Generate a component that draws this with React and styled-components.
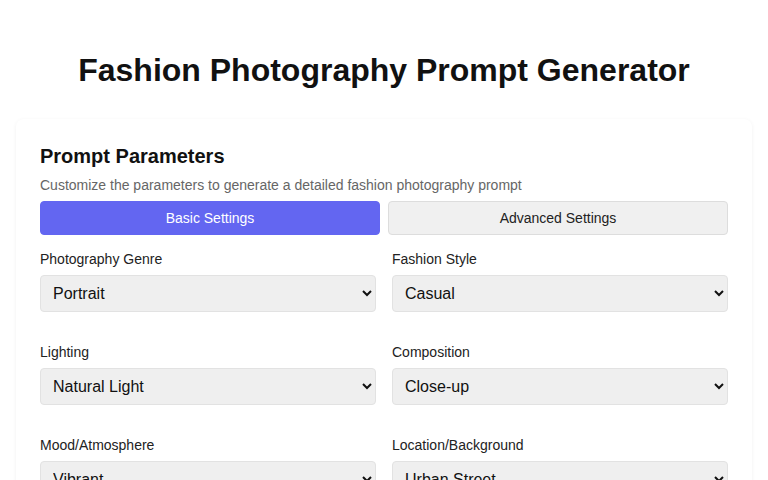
import React, { useState } from 'react';
import styled, { createGlobalStyle } from 'styled-components';

const GlobalStyle = createGlobalStyle`
  body {
    margin: 0;
    background: #fff;
    font-family: "Liberation Sans", Arial, sans-serif;
    color: #222;
  }
`;

const Page = styled.div`
  padding: 16px;
`;

const Title = styled.h1`
  text-align: center;
  font-size: 32px;
  font-weight: bold;
  color: #111;
  margin: 36px 0 30px;
`;

const Card = styled.div`
  background: #fff;
  border-radius: 8px;
  box-shadow: 0 1px 4px rgba(0, 0, 0, 0.06);
  padding: 24px;
`;

const CardTitle = styled.h2`
  font-size: 20px;
  line-height: 26px;
  font-weight: bold;
  margin: 0 0 8px;
  color: #111;
`;

const Subtitle = styled.p`
  font-size: 14px;
  line-height: 16px;
  color: #666;
  margin: 0 0 8px;
`;

const Tabs = styled.div`
  display: grid;
  grid-template-columns: 1fr 1fr;
  gap: 8px;
  margin-bottom: 16px;
`;

const Tab = styled.button`
  height: 34px;
  font-family: inherit;
  font-size: 14px;
  border-radius: 4px;
  cursor: pointer;
  border: 1px solid ${p => (p.$active ? '#6366f1' : '#ddd')};
  background: ${p => (p.$active ? '#6366f1' : '#f0f0f0')};
  color: ${p => (p.$active ? '#fff' : '#222')};
`;

const Grid = styled.div`
  display: grid;
  grid-template-columns: 1fr 1fr;
  column-gap: 16px;
  row-gap: 32px;
`;

const Field = styled.div`
  display: flex;
  flex-direction: column;
`;

const Label = styled.label`
  font-size: 14px;
  color: #222;
  margin-bottom: 8px;
`;

const Select = styled.select`
  height: 37px;
  padding: 0 8px;
  font-family: inherit;
  font-size: 16px;
  color: #111;
  background: #efefef;
  border: 1px solid #e2e2e2;
  border-radius: 4px;
`;

const fields = [
  { label: 'Photography Genre', options: ['Portrait', 'Editorial', 'Street Style', 'Runway'] },
  { label: 'Fashion Style', options: ['Casual', 'Formal', 'Streetwear', 'Vintage'] },
  { label: 'Lighting', options: ['Natural Light', 'Studio Light', 'Golden Hour', 'Neon'] },
  { label: 'Composition', options: ['Close-up', 'Full Body', 'Medium Shot', 'Wide Shot'] },
  { label: 'Mood/Atmosphere', options: ['Vibrant', 'Moody', 'Dreamy', 'Minimal'] },
  { label: 'Location/Background', options: ['Urban Street', 'Studio', 'Beach', 'Forest'] },
];

export default function App() {
  const [tab, setTab] = useState('basic');

  return (
    <Page>
      <GlobalStyle />
      <Title>Fashion Photography Prompt Generator</Title>
      <Card>
        <CardTitle>Prompt Parameters</CardTitle>
        <Subtitle>Customize the parameters to generate a detailed fashion photography prompt</Subtitle>
        <Tabs>
          <Tab $active={tab === 'basic'} onClick={() => setTab('basic')}>Basic Settings</Tab>
          <Tab $active={tab === 'advanced'} onClick={() => setTab('advanced')}>Advanced Settings</Tab>
        </Tabs>
        <Grid>
          {fields.map(f => (
            <Field key={f.label}>
              <Label>{f.label}</Label>
              <Select defaultValue={f.options[0]}>
                {f.options.map(o => (
                  <option key={o}>{o}</option>
                ))}
              </Select>
            </Field>
          ))}
        </Grid>
      </Card>
    </Page>
  );
}
